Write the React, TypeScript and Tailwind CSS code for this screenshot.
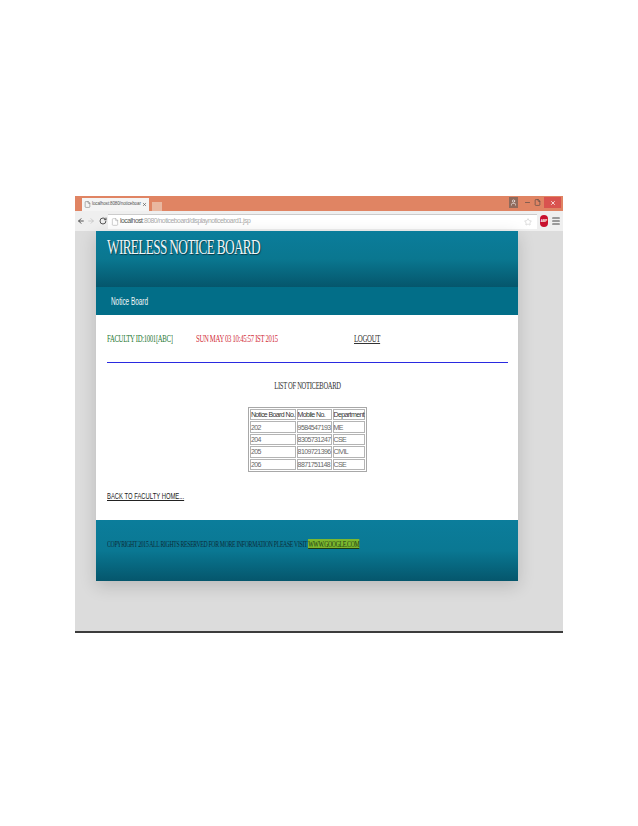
import { ArrowLeft, ArrowRight, RotateCw, Star, File, Menu, X, Minus, User } from "lucide-react";

const rows = [
  ["202", "9584547193", "ME"],
  ["204", "8305731247", "CSE"],
  ["205", "8109721396", "CIVIL"],
  ["206", "8871751148", "CSE"],
];

const serif = "font-['Liberation_Serif',serif]";

function Cell({ children }: { children: React.ReactNode }) {
  return (
    <td className="border border-[#b4b4b4] p-0 h-[11.4px] leading-[9px] whitespace-nowrap">
      {children}
    </td>
  );
}

export default function App() {
  return (
    <div className="min-h-[826px] bg-white pt-[196px] font-['Liberation_Sans',sans-serif]">
      <div className="ml-[75px] w-[488px] border-b-2 border-[#3c3c3c] flex flex-col">
        {/* tab strip */}
        <div className="h-[15px] bg-[#e08463] flex items-end pl-[7px]">
          <div className="w-[67px] h-[13px] bg-[#f4f4f4] flex items-center gap-px px-[2px] text-[4.5px] tracking-[-0.1px] text-[#555] whitespace-nowrap">
            <File size={7} strokeWidth={1.5} />
            <span className="flex-1">localhost:8080/noticeboar</span>
            <X size={5} strokeWidth={3} />
          </div>
          <div className="ml-[3px] w-[10px] h-[9px] bg-[#e9b7a0]" />
          <div className="ml-auto self-start flex items-center h-[13px]">
            <div className="w-[9px] h-[11px] bg-[#8f6a5c] flex items-center justify-center">
              <User size={7} className="text-white" />
            </div>
            <Minus size={7} className="ml-[6px] text-[#444]" />
            <File size={7} className="ml-[3px] text-[#444]" />
            <div className="ml-[3px] w-[17px] h-[11px] bg-[#d9534f] flex items-center justify-center">
              <X size={6} strokeWidth={3} className="text-white" />
            </div>
            <div className="w-[2px]" />
          </div>
        </div>
        {/* toolbar */}
        <div className="h-[20px] bg-[#efefef] flex items-center px-[2px] text-[#555]">
          <ArrowLeft size={8} strokeWidth={3} />
          <ArrowRight size={8} strokeWidth={2} className="ml-[2px] text-[#bbb]" />
          <RotateCw size={8} strokeWidth={3} className="ml-[4px]" />
          <div className="ml-[1px] flex-1 h-[15px] bg-white flex items-center px-[3px] gap-[1px] text-[6.8px] tracking-[-0.48px] border-t border-[#ccc]">
            <File size={8} strokeWidth={1.2} className="text-[#888]" />
            <span className="text-[#555]">localhost</span>
            <span className="-ml-[1px] text-[#aaa]">:8080/noticeboard/displaynoticeboard1.jsp</span>
            <Star size={8} className="ml-auto mr-[2px] text-[#ccc]" />
          </div>
          <div className="ml-[3px] w-[8px] h-[12px] rounded-full bg-[#c8102e] text-white text-[3px] flex items-center justify-center font-bold">
            ABP
          </div>
          <Menu size={10} strokeWidth={2.5} className="ml-[3px] text-[#444]" />
        </div>
        {/* page */}
        <div className="h-[400px] bg-[#dcdcdc] pl-[21px]">
          <div className="w-[422px] h-[350px] flex flex-col shadow-[0_5px_16px_rgba(0,0,0,0.16)]">
            <div className="h-[56px] bg-gradient-to-b from-[#0b7d9b] via-[#0a7790] to-[#05566c] pl-[11px] pt-[3px]">
              <div className={`${serif} text-[20px] leading-[26px] tracking-[-1px] whitespace-nowrap origin-left scale-x-[0.665] text-[#eef5f7] [text-shadow:1px_1px_1px_#0a3a48]`}>
                WIRELESS NOTICE BOARD
              </div>
            </div>
            <div className="h-[28px] bg-[#026e88] pl-[15px] flex items-center text-[10px] text-[#f2f6f7]">
              <span className="origin-left scale-x-[0.64] whitespace-nowrap">Notice Board</span>
            </div>
            <div className="h-[205px] bg-white flex flex-col pl-[11px] pr-[10px]">
              <div className={`${serif} flex items-center h-[22px] mt-[13px] text-[10.5px] tracking-[-0.5px] whitespace-nowrap`}>
                <span className="w-[89px] text-[#2a7a35] origin-left scale-x-[0.64]">FACULTY ID:1001[ABC]</span>
                <span className="w-[158px] text-[#d2303c] origin-left scale-x-[0.64]">SUN MAY 03 10:45:57 IST 2015</span>
                <span className="text-[#333] underline origin-left scale-x-[0.65]">LOGOUT</span>
              </div>
              <div className="h-px bg-[#2a2ae0] mt-[12px]" />
              <div className={`${serif} text-center text-[10.5px] tracking-[-0.5px] leading-[12px] text-[#333] mt-[17px] scale-x-[0.625] whitespace-nowrap`}>
                LIST OF NOTICEBOARD
              </div>
              <div className="flex justify-center mt-[15px]">
                <table className="border border-[#a8a8a8] border-separate border-spacing-px text-[7px] tracking-[-0.6px] text-[#666] bg-white">
                  <thead>
                    <tr className="text-[#333]">
                      <Cell>Notice Board No.</Cell>
                      <Cell>Mobile No.</Cell>
                      <Cell>Department</Cell>
                    </tr>
                  </thead>
                  <tbody>
                    {rows.map((row) => (
                      <tr key={row[0]}>
                        {row.map((value) => (
                          <Cell key={value}>{value}</Cell>
                        ))}
                      </tr>
                    ))}
                  </tbody>
                </table>
              </div>
              <div className="mt-[18px] text-[8.5px] leading-[12px] text-[#222] underline whitespace-nowrap origin-left scale-x-[0.69]">
                BACK TO FACULTY HOME...
              </div>
            </div>
            <div className="h-[61px] bg-gradient-to-b from-[#0b7d9b] via-[#0a7893] to-[#05566c] pl-[11px] pt-[19px]">
              <div className={`${serif} text-[9px] leading-[10px] tracking-[-0.5px] whitespace-nowrap origin-left scale-x-[0.642] text-[#0c2c38]`}>
                COPYRIGHT 2015 ALL RIGHTS RESERVED FOR MORE INFORMATION PLEASE VISIT{" "}
                <span className="bg-[#7cb82f] text-[#1c3a10] underline">WWW.GOOGLE.COM</span>
              </div>
            </div>
          </div>
        </div>
      </div>
    </div>
  );
}
